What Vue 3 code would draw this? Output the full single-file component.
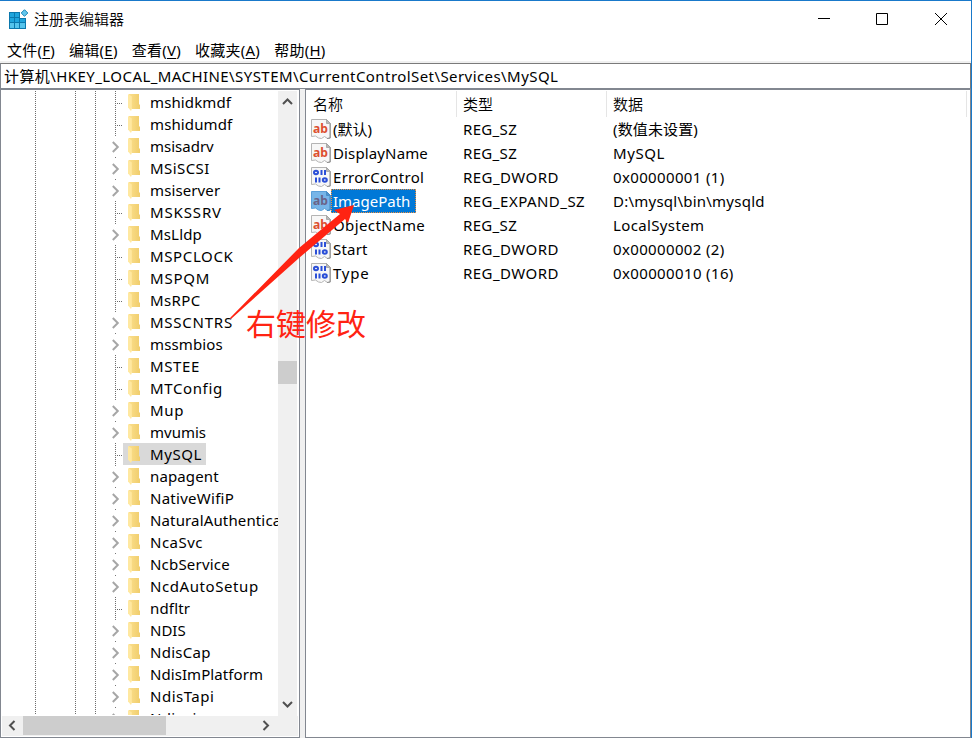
<script setup>
const menus = [
  { label: '文件', key: 'F' },
  { label: '编辑', key: 'E' },
  { label: '查看', key: 'V' },
  { label: '收藏夹', key: 'A' },
  { label: '帮助', key: 'H' },
]

// A leading ">" marks a key that has sub-keys; the number is the extra tracking in px over the word.
const nodes = [
  ['mshidkmdf', 1], ['mshidumdf', 1], ['>msisadrv', 0], ['>MSiSCSI', 3], ['>msiserver', 1],
  ['MSKSSRV', 6], ['>MsLldp', 1], ['MSPCLOCK', 5], ['MSPQM', 4], ['MsRPC', 2],
  ['>MSSCNTRS', 6], ['>mssmbios', 1], ['MSTEE', 3], ['MTConfig', 5], ['>Mup', 2],
  ['>mvumis', 0], ['MySQL', 3], ['>napagent', 1], ['>NativeWifiP', 3],
  ['>NaturalAuthentication', 3], ['>NcaSvc', 3], ['>NcbService', 2], ['>NcdAutoSetup', 7],
  ['ndfltr', 1], ['>NDIS', 0], ['>NdisCap', 2], ['>NdisImPlatform', 1], ['>NdisTapi', 4],
  ['>Ndisuio', 2],
].map(([n, extra]) => ({ name: n.replace('>', ''), expandable: n.startsWith('>'), extra }))

const values = [
  { name: '(默认)', type: 'REG_SZ', data: '(数值未设置)', extra: [0, 2, 1] },
  { name: 'DisplayName', type: 'REG_SZ', data: 'MySQL', extra: [1.5, 2, 3] },
  { name: 'ErrorControl', type: 'REG_DWORD', data: '0x00000001 (1)', extra: [3.5, 4, 5] },
  { name: 'ImagePath', type: 'REG_EXPAND_SZ', data: 'D:\\mysql\\bin\\mysqld', selected: true, extra: [0, 6, 4.5] },
  { name: 'ObjectName', type: 'REG_SZ', data: 'LocalSystem', extra: [4, 2, 4] },
  { name: 'Start', type: 'REG_DWORD', data: '0x00000002 (2)', extra: [1, 4, 5] },
  { name: 'Type', type: 'REG_DWORD', data: '0x00000010 (16)', extra: [3, 4, 5.5] },
]

const tracking = (text, extra) => ({ letterSpacing: `${(extra / text.length).toFixed(3)}px` })
</script>

<template>
  <div class="window">
    <header class="titlebar">
      <svg class="app-icon" width="20" height="20" viewBox="0 0 20 20">
        <path d="M0 3h11v6h6v11H0z" fill="#0b78ad" />
        <g fill="#1fa5dd">
          <rect x="1" y="4" width="4" height="4" /><rect x="6" y="4" width="4" height="4" />
          <rect x="1" y="9" width="4" height="4" /><rect x="6" y="9" width="4" height="4" />
          <rect x="11" y="10" width="5" height="3" />
        </g>
        <g fill="#55c4ec">
          <rect x="1" y="14" width="4" height="5" /><rect x="6" y="14" width="4" height="5" />
          <rect x="11" y="14" width="5" height="5" />
        </g>
        <path d="M15.500 .7l3.300 3.300-3.300 3.300-3.300-3.300z" fill="#63c7ee" stroke="#1886b5" />
      </svg>
      <span class="title">注册表编辑器</span>
      <div class="controls">
        <svg width="14" height="14" viewBox="0 0 14 14"><path d="M2 6.500h12" stroke="#000" /></svg>
        <svg width="14" height="14" viewBox="0 0 14 14"><path d="M1.500 1.500h11v11h-11z" fill="none" stroke="#000" /></svg>
        <svg width="14" height="14" viewBox="0 0 14 14"><path d="M1 1l12 12M13 1L1 13" stroke="#000" /></svg>
      </div>
    </header>

    <nav class="menubar">
      <span v-for="m in menus" :key="m.key">{{ m.label }}(<u>{{ m.key }}</u>)</span>
    </nav>

    <div class="address">计算机\HKEY_LOCAL_MACHINE\SYSTEM\CurrentControlSet\Services\MySQL</div>

    <main class="panes">
      <section class="tree-pane">
        <div class="tree-body">
          <div class="tree">
            <div
              v-for="n in nodes"
              :key="n.name"
              class="node"
              :class="{ current: n.name === 'MySQL' }"
            >
              <i class="guide g1"></i><i class="guide g2"></i><i class="guide g3"></i>
              <span class="branch">
                <svg width="19" height="22" viewBox="0 0 19 22">
                  <g v-if="n.expandable">
                    <rect x="11" y="0" width="1" height="1" fill="#777" />
                    <path d="M8.800 7l5 5-5 5" fill="none" stroke="#a6a6a6" stroke-width="2" />
                  </g>
                  <g v-else fill="none" stroke="#6d6d6d" stroke-dasharray="1 1">
                    <path d="M11.500 0v22" /><path d="M13 12.500h6" />
                  </g>
                </svg>
              </span>
              <span class="entry">
                <svg class="folder" width="13" height="18" viewBox="0 0 13 18">
                  <defs>
                    <linearGradient id="back" x1="0" x2="1">
                      <stop offset="0" stop-color="#fbdf8c" /><stop offset="1" stop-color="#f0cd6c" />
                    </linearGradient>
                  </defs>
                  <path d="M1 0h10v10.500h1V15H4L1 12z" fill="url(#back)" />
                  <path d="M0 0l3.800 2.500V15L3 17l-3-3.500z" fill="#ffe8a0" />
                </svg>
                <span class="name" :style="tracking(n.name, n.extra)">{{ n.name }}</span>
              </span>
            </div>
          </div>
          <div class="vscroll">
            <svg width="19" height="20" viewBox="0 0 19 20"><path d="M5 13l4.500-4.500L14 13" fill="none" stroke="#505050" stroke-width="2" /></svg>
            <div class="vthumb"></div>
            <svg class="down" width="19" height="20" viewBox="0 0 19 20"><path d="M5 6l4.500 4.500L14 6" fill="none" stroke="#505050" stroke-width="2" /></svg>
          </div>
        </div>
        <div class="hscroll">
          <svg width="21" height="20" viewBox="0 0 21 20"><path d="M12.500 5L8 9.500l4.500 4.500" fill="none" stroke="#505050" stroke-width="2" /></svg>
          <div class="hthumb"></div>
          <svg class="right" width="21" height="20" viewBox="0 0 21 20"><path d="M7.500 5L12 9.500 7.500 14" fill="none" stroke="#505050" stroke-width="2" /></svg>
        </div>
      </section>

      <section class="value-pane">
        <div class="columns">
          <span>名称</span><span>类型</span><span>数据</span>
        </div>
        <div v-for="v in values" :key="v.name" class="value" :class="{ selected: v.selected }">
          <div class="cell-name">
            <svg class="value-icon" width="20" height="20" viewBox="0 0 20 20">
              <path
                class="sheet"
                d="M.5.500h15l4 4V19l-3 .5-3-2-3 2-3-.5-3-2-4 .5z"
                fill="#f7f7f7"
                stroke="#b4b4b4"
              />
              <path class="fold" d="M15.500.5v4h4z" fill="#b8b8b8" stroke="#999" stroke-width=".7" />
              <path class="edge" d="M19 5v14l-3 .5" fill="none" stroke="#8d8d8d" />
              <g v-if="v.type === 'REG_DWORD'" fill="none" stroke="#2b4fd7" stroke-width="2">
                <ellipse cx="5" cy="5.500" rx="2" ry="1.800" />
                <path d="M10.500 3v5M14 3v5M5 10.500v5M8.500 10.500v5" />
                <ellipse cx="13.800" cy="13" rx="2" ry="1.800" />
              </g>
              <text v-else class="letters" x="2" y="13.500" textLength="15" lengthAdjust="spacingAndGlyphs">ab</text>
            </svg>
            <span class="label" :style="tracking(v.name, v.extra[0])">{{ v.name }}</span>
          </div>
          <span class="cell" :style="tracking(v.type, v.extra[1])">{{ v.type }}</span>
          <span class="cell" :style="tracking(v.data, v.extra[2])">{{ v.data }}</span>
        </div>
      </section>
    </main>

    <svg class="arrow" width="130" height="122" viewBox="0 0 130 122">
      <path d="M1 117L70 47l41-34-6-4 20-5-6 18-3-4L70 57 2 118z" fill="#ff2312" />
    </svg>
    <div class="note">右键修改</div>
  </div>
</template>

<style>
body {
  margin: 0;
  overflow: hidden;
}
</style>

<style scoped>
.window {
  position: relative;
  box-sizing: border-box;
  width: 972px;
  height: 738px;
  display: flex;
  flex-direction: column;
  background: #fff;
  border-top: 1px solid #1979ca;
  border-right: 1px solid #1979ca;
  font-family: "Noto Sans", "Noto Sans CJK SC", sans-serif;
  font-size: 15px;
  color: #000;
  white-space: nowrap;
  overflow: hidden;
}
.titlebar {
  height: 38px;
  display: flex;
  align-items: center;
  padding-left: 9px;
}
.app-icon {
  margin-top: -3px;
}
.title {
  margin: -3px 0 0 5px;
  font-weight: 350;
  font-family: "Noto Sans CJK SC", sans-serif;
}
.controls {
  display: flex;
  gap: 45px;
  margin: -2px 0 0 auto;
  padding-right: 23px;
}
.menubar {
  height: 22px;
  line-height: 22px;
  display: flex;
  gap: 14px;
  padding-left: 7px;
  letter-spacing: 0.25px;
  border-bottom: 2px solid #f0f0f0;
}
.menubar u {
  text-underline-offset: 2px;
}
.address {
  box-sizing: border-box;
  height: 26px;
  line-height: 25px;
  padding-left: 3px;
  letter-spacing: 0.43px;
  border: 1px solid #7a7a7a;
  border-left-color: #828790;
  border-bottom-color: #828790;
}
.panes {
  flex: 1;
  min-height: 0;
  display: flex;
  gap: 5px;
  background: #f0f0f0;
}
.tree-pane,
.value-pane {
  box-sizing: border-box;
  border: 1px solid #828790;
  background: #fff;
}
.tree-pane {
  width: 300px;
  display: flex;
  flex-direction: column;
  padding: 1px;
}
.tree-body {
  height: 625px;
  display: flex;
}
.tree {
  width: 276px;
  height: 624px;
  overflow: hidden;
}
.node {
  height: 22px;
  line-height: 22px;
  display: flex;
}
.node > * {
  flex-shrink: 0;
}
.guide {
  width: 1px;
  background: repeating-linear-gradient(#6d6d6d 0 1px, #fff 1px 2px);
}
.g1 { margin-left: 33px; }
.g2 { margin-left: 39px; }
.g3 { margin-left: 19px; }
.branch {
  width: 19px;
  margin-left: 8px;
  display: flex;
}
.entry {
  display: flex;
  padding: 0 4px 0 5px;
}
.current .entry {
  background: #d9d9d9;
}
.folder {
  margin-top: 3px;
}
.name {
  margin-left: 9px;
}
.vscroll {
  width: 19px;
  display: flex;
  flex-direction: column;
  background: #f0f0f0;
}
.vthumb {
  height: 23px;
  margin-top: 250px;
  background: #cdcdcd;
}
.down {
  margin-top: auto;
}
.hscroll {
  height: 20px;
  display: flex;
  background: #f0f0f0;
}
.hthumb {
  width: 143px;
  height: 19px;
  background: #cdcdcd;
}
.right {
  margin-left: auto;
  margin-right: 21px;
}
.value-pane {
  flex: 1;
  padding-top: 1px;
}
.columns {
  height: 26px;
  line-height: 25px;
  display: flex;
  font-weight: 350;
  font-family: "Noto Sans CJK SC", sans-serif;
}
.columns span {
  box-sizing: border-box;
  width: 150px;
  padding-left: 6px;
  border-right: 1px solid #e5e5e5;
}
.columns span:first-child {
  width: 151px;
  padding-left: 7px;
}
.columns span:last-child {
  width: 360px;
}
.value {
  height: 24px;
  line-height: 24px;
  display: grid;
  grid-template-columns: 157px 150px 1fr;
}
.cell-name {
  display: flex;
  align-items: center;
  padding-left: 5px;
}
.value-icon {
  position: relative;
  z-index: 0;
}
.label {
  box-sizing: border-box;
  height: 24px;
  padding: 0 6px 0 2px;
}
.letters {
  font-size: 13px;
  font-weight: 700;
  fill: #dd4f30;
}
.selected .label {
  background: #0078d7;
  color: #fff;
  line-height: 22px;
  padding: 0 5px 0 1px;
  border: 1px dotted #f0913f;
}
.selected .sheet {
  fill: #77b5e8;
  stroke: #5a9fd8;
}
.selected .fold {
  fill: #4d94cf;
  stroke: #3f84bd;
}
.selected .edge {
  stroke: #3f84bd;
}
.selected .letters {
  fill: #6a6388;
}
.arrow {
  position: absolute;
  left: 229px;
  top: 200px;
}
.note {
  position: absolute;
  left: 246px;
  top: 299px;
  font-family: "Noto Sans CJK SC", sans-serif;
  font-size: 30px;
  line-height: 44px;
  color: #ff2312;
}
</style>
